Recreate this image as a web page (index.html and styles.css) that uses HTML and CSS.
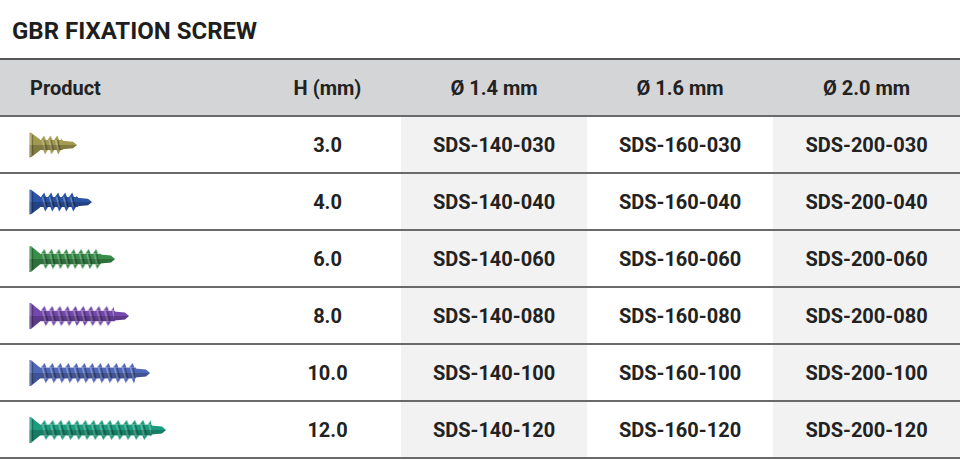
FILE: index.html
```html
<!DOCTYPE html>
<html lang="en">
<head>
<meta charset="utf-8">
<title>GBR Fixation Screw</title>
<link rel="stylesheet" href="styles.css">
</head>
<body>
<h1 class="title">GBR FIXATION SCREW</h1>

<div class="table">
  <div class="row head">
    <div class="cell product">Product</div>
    <div class="cell">H (mm)</div>
    <div class="cell">Ø 1.4 mm</div>
    <div class="cell">Ø 1.6 mm</div>
    <div class="cell">Ø 2.0 mm</div>
  </div>

  <div class="row">
    <div class="cell product">
      <svg class="screw gold" width="48" height="28" viewBox="0 -14 48 28">
        <defs>
          <pattern id="th-gold" patternUnits="userSpaceOnUse" x="12" y="-10" width="6.6" height="20">
            <path d="M0 5 L3 0.6 L4.8 5 Z M2.2 15 L4 19.4 L6.6 15 Z" fill="currentColor"/>
            <path d="M0.8 5 L2.3 5 L4.6 15 L3.1 15 Z" fill="rgba(255,255,255,0.3)"/>
            <path d="M2.8 5 L4.2 5 L6.5 15 L5.1 15 Z" fill="rgba(0,0,0,0.3)"/>
          </pattern>
        </defs>
        <g fill="currentColor">
          <path d="M0.5 -12.5 L2.5 -12 L11 -5.5 L11 5.5 L2.5 12 L0.5 12.5 Z"/>
          <rect x="10" y="-5" width="24" height="10"/>
          <path d="M33 -4.2 L44 -3.2 L48 0 L44 3.2 L33 4.2 Z"/>
        </g>
        <rect x="12" y="-10" width="21" height="20" fill="url(#th-gold)"/>
        <path class="shadow" d="M0.5 0 L48 0 L44 3.2 L33 4.2 L33 5 L11 5 L2.5 12 L0.5 12.5 Z"/>
        <rect class="hilite" x="0.8" y="-11.5" width="1.6" height="23"/>
        <rect class="slot" x="3" y="-10" width="1.2" height="20"/>
      </svg>
    </div>
    <div class="cell">3.0</div>
    <div class="cell shade">SDS-140-030</div>
    <div class="cell">SDS-160-030</div>
    <div class="cell shade">SDS-200-030</div>
  </div>

  <div class="row">
    <div class="cell product">
      <svg class="screw blue" width="63" height="28" viewBox="0 -14 63 28">
        <defs>
          <pattern id="th-blue" patternUnits="userSpaceOnUse" x="12" y="-10" width="7" height="20">
            <path d="M0 5 L3.2 0.6 L5 5 Z M2.4 15 L4.2 19.4 L7 15 Z" fill="currentColor"/>
            <path d="M0.8 5 L2.3 5 L4.8 15 L3.3 15 Z" fill="rgba(255,255,255,0.3)"/>
            <path d="M2.9 5 L4.3 5 L6.8 15 L5.4 15 Z" fill="rgba(0,0,0,0.3)"/>
          </pattern>
        </defs>
        <g fill="currentColor">
          <path d="M0.5 -12.5 L2.5 -12 L11 -5.5 L11 5.5 L2.5 12 L0.5 12.5 Z"/>
          <rect x="10" y="-5" width="39" height="10"/>
          <path d="M48 -4.2 L59 -3.2 L63 0 L59 3.2 L48 4.2 Z"/>
        </g>
        <rect x="12" y="-10" width="36" height="20" fill="url(#th-blue)"/>
        <path class="shadow" d="M0.5 0 L63 0 L59 3.2 L48 4.2 L48 5 L11 5 L2.5 12 L0.5 12.5 Z"/>
        <rect class="hilite" x="0.8" y="-11.5" width="1.6" height="23"/>
        <rect class="slot" x="3" y="-10" width="1.2" height="20"/>
      </svg>
    </div>
    <div class="cell">4.0</div>
    <div class="cell shade">SDS-140-040</div>
    <div class="cell">SDS-160-040</div>
    <div class="cell shade">SDS-200-040</div>
  </div>

  <div class="row">
    <div class="cell product">
      <svg class="screw green" width="86" height="28" viewBox="0 -14 86 28">
        <defs>
          <pattern id="th-green" patternUnits="userSpaceOnUse" x="12" y="-10.5" width="7.4" height="21">
            <path d="M0 5.3 L3.4 0.6 L5.3 5.3 Z M2.5 15.7 L4.4 20.4 L7.4 15.7 Z" fill="currentColor"/>
            <path d="M0.8 5.3 L2.4 5.3 L5 15.7 L3.4 15.7 Z" fill="rgba(255,255,255,0.3)"/>
            <path d="M3 5.3 L4.5 5.3 L7.1 15.7 L5.6 15.7 Z" fill="rgba(0,0,0,0.3)"/>
          </pattern>
        </defs>
        <g fill="currentColor">
          <path d="M0.5 -13 L2.5 -12.5 L11 -5.5 L11 5.5 L2.5 12.5 L0.5 13 Z"/>
          <rect x="10" y="-5.2" width="62" height="10.4"/>
          <path d="M71 -4.4 L82 -3.4 L86 0 L82 3.4 L71 4.4 Z"/>
        </g>
        <rect x="12" y="-10.5" width="59" height="21" fill="url(#th-green)"/>
        <path class="shadow" d="M0.5 0 L86 0 L82 3.4 L71 4.4 L71 5.2 L11 5.2 L2.5 12.5 L0.5 13 Z"/>
        <rect class="hilite" x="0.8" y="-12" width="1.6" height="24"/>
        <rect class="slot" x="3" y="-10.5" width="1.2" height="21"/>
      </svg>
    </div>
    <div class="cell">6.0</div>
    <div class="cell shade">SDS-140-060</div>
    <div class="cell">SDS-160-060</div>
    <div class="cell shade">SDS-200-060</div>
  </div>

  <div class="row">
    <div class="cell product">
      <svg class="screw purple" width="100" height="28" viewBox="0 -14 100 28">
        <defs>
          <pattern id="th-purple" patternUnits="userSpaceOnUse" x="12" y="-10.5" width="7.8" height="21">
            <path d="M0 5.3 L3.5 0.6 L5.5 5.3 Z M2.6 15.7 L4.6 20.4 L7.8 15.7 Z" fill="currentColor"/>
            <path d="M0.8 5.3 L2.4 5.3 L5.1 15.7 L3.5 15.7 Z" fill="rgba(255,255,255,0.3)"/>
            <path d="M3.1 5.3 L4.6 5.3 L7.4 15.7 L5.9 15.7 Z" fill="rgba(0,0,0,0.3)"/>
          </pattern>
        </defs>
        <g fill="currentColor">
          <path d="M0.5 -13 L2.5 -12.5 L11 -5.5 L11 5.5 L2.5 12.5 L0.5 13 Z"/>
          <rect x="10" y="-5.2" width="76" height="10.4"/>
          <path d="M85 -4.4 L96 -3.4 L100 0 L96 3.4 L85 4.4 Z"/>
        </g>
        <rect x="12" y="-10.5" width="73" height="21" fill="url(#th-purple)"/>
        <path class="shadow" d="M0.5 0 L100 0 L96 3.4 L85 4.4 L85 5.2 L11 5.2 L2.5 12.5 L0.5 13 Z"/>
        <rect class="hilite" x="0.8" y="-12" width="1.6" height="24"/>
        <rect class="slot" x="3" y="-10.5" width="1.2" height="21"/>
      </svg>
    </div>
    <div class="cell">8.0</div>
    <div class="cell shade">SDS-140-080</div>
    <div class="cell">SDS-160-080</div>
    <div class="cell shade">SDS-200-080</div>
  </div>

  <div class="row">
    <div class="cell product">
      <svg class="screw indigo" width="121" height="28" viewBox="0 -14 121 28">
        <defs>
          <pattern id="th-indigo" patternUnits="userSpaceOnUse" x="12" y="-10.5" width="8" height="21">
            <path d="M0 5.3 L3.6 0.6 L5.6 5.3 Z M2.7 15.7 L4.7 20.4 L8 15.7 Z" fill="currentColor"/>
            <path d="M0.8 5.3 L2.4 5.3 L5.2 15.7 L3.6 15.7 Z" fill="rgba(255,255,255,0.3)"/>
            <path d="M3.2 5.3 L4.7 5.3 L7.6 15.7 L6.1 15.7 Z" fill="rgba(0,0,0,0.3)"/>
          </pattern>
        </defs>
        <g fill="currentColor">
          <path d="M0.5 -13 L2.5 -12.5 L11 -5.5 L11 5.5 L2.5 12.5 L0.5 13 Z"/>
          <rect x="10" y="-5.4" width="97" height="10.8"/>
          <path d="M106 -4.6 L117 -3.5 L121 0 L117 3.5 L106 4.6 Z"/>
        </g>
        <rect x="12" y="-10.5" width="94" height="21" fill="url(#th-indigo)"/>
        <path class="shadow" d="M0.5 0 L121 0 L117 3.5 L106 4.6 L106 5.4 L11 5.4 L2.5 12.5 L0.5 13 Z"/>
        <rect class="hilite" x="0.8" y="-12" width="1.6" height="24"/>
        <rect class="slot" x="3" y="-10.5" width="1.2" height="21"/>
      </svg>
    </div>
    <div class="cell">10.0</div>
    <div class="cell shade">SDS-140-100</div>
    <div class="cell">SDS-160-100</div>
    <div class="cell shade">SDS-200-100</div>
  </div>

  <div class="row">
    <div class="cell product">
      <svg class="screw teal" width="137" height="28" viewBox="0 -14 137 28">
        <defs>
          <pattern id="th-teal" patternUnits="userSpaceOnUse" x="12" y="-10.5" width="8.2" height="21">
            <path d="M0 5.3 L3.7 0.6 L5.7 5.3 Z M2.8 15.7 L4.8 20.4 L8.2 15.7 Z" fill="currentColor"/>
            <path d="M0.8 5.3 L2.4 5.3 L5.3 15.7 L3.7 15.7 Z" fill="rgba(255,255,255,0.3)"/>
            <path d="M3.3 5.3 L4.8 5.3 L7.8 15.7 L6.3 15.7 Z" fill="rgba(0,0,0,0.3)"/>
          </pattern>
        </defs>
        <g fill="currentColor">
          <path d="M0.5 -13 L2.5 -12.5 L11 -5.5 L11 5.5 L2.5 12.5 L0.5 13 Z"/>
          <rect x="10" y="-5.4" width="113" height="10.8"/>
          <path d="M122 -4.6 L133 -3.5 L137 0 L133 3.5 L122 4.6 Z"/>
        </g>
        <rect x="12" y="-10.5" width="110" height="21" fill="url(#th-teal)"/>
        <path class="shadow" d="M0.5 0 L137 0 L133 3.5 L122 4.6 L122 5.4 L11 5.4 L2.5 12.5 L0.5 13 Z"/>
        <rect class="hilite" x="0.8" y="-12" width="1.6" height="24"/>
        <rect class="slot" x="3" y="-10.5" width="1.2" height="21"/>
      </svg>
    </div>
    <div class="cell">12.0</div>
    <div class="cell shade">SDS-140-120</div>
    <div class="cell">SDS-160-120</div>
    <div class="cell shade">SDS-200-120</div>
  </div>
</div>
</body>
</html>
```

FILE: styles.css
```css
html, body {
  margin: 0;
  padding: 0;
  background: #ffffff;
}

body {
  width: 960px;
  font-family: Roboto, "Liberation Sans", Arial, sans-serif;
  color: #222222;
}

.title {
  margin: 0;
  box-sizing: border-box;
  height: 58px;
  padding: 17px 0 0 12px;
  font-size: 24px;
  line-height: 28px;
  font-weight: 700;
  color: #1e1e1e;
}

.table {
  border-top: 2px solid #585858;
}

.row {
  display: grid;
  grid-template-columns: 254px 147px 186px 186px 187px;
  height: 57px;
  box-sizing: border-box;
  border-bottom: 2px solid #6a6a6a;
}

.row.head {
  background: #d4d5d7;
}

.cell {
  display: flex;
  align-items: center;
  justify-content: center;
  font-size: 20px;
  font-weight: 700;
  line-height: 24px;
}

.cell.product {
  justify-content: flex-start;
  padding-left: 29px;
}

.head .cell.product {
  padding-left: 30px;
}

.cell.shade {
  background: #f2f2f3;
}

.screw {
  display: block;
}

.screw .shadow {
  fill: rgba(0, 0, 0, 0.2);
}

.screw .hilite {
  fill: rgba(255, 255, 255, 0.22);
}

.screw .slot {
  fill: rgba(0, 0, 0, 0.25);
}

.gold { color: #a39a52; }
.blue { color: #2c54a6; }
.green { color: #3a8c4a; }
.purple { color: #7449ab; }
.indigo { color: #5068b8; }
.teal { color: #1c9c7e; }
```
